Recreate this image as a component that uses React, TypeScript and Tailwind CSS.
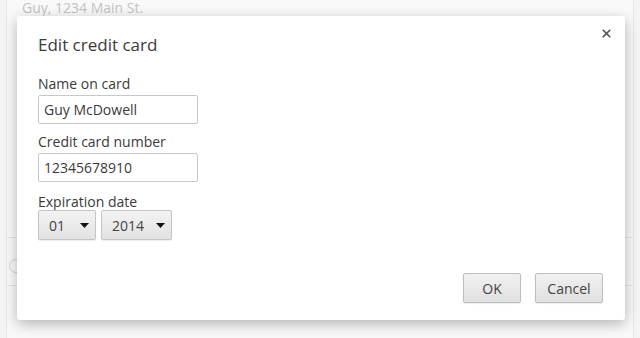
import { X } from "lucide-react";

function Caret() {
  return (
    <svg width="9" height="5" viewBox="0 0 9 5" className="shrink-0">
      <path d="M0 0h9L4.5 5z" fill="#111" />
    </svg>
  );
}

function Field({ label, value }: { label: string; value: string }) {
  return (
    <div className="flex flex-col">
      <label className="text-[14px] leading-[17px] text-[#3a3a3a]">{label}</label>
      <div className="mt-[3px] flex h-[29px] w-[160px] items-center rounded-[2px] border border-[#c8c8c8] bg-white pl-[5px] text-[14px] text-[#3a3a3a]">
        {value}
      </div>
    </div>
  );
}

function Select({ value, width }: { value: string; width: string }) {
  return (
    <div
      className={`flex h-[30px] ${width} items-center justify-between rounded-[2px] border border-[#c4c4c4] bg-gradient-to-b from-[#f3f3f3] to-[#e2e2e2] pl-[10px] pr-[6px] text-[14px] text-[#444] shadow-[0_1px_1px_rgba(0,0,0,0.08)]`}
    >
      <span>{value}</span>
      <Caret />
    </div>
  );
}

function Button({ children, width }: { children: string; width: string }) {
  return (
    <button
      className={`flex h-[30px] ${width} items-center justify-center rounded-[2px] border border-[#bdbdbd] bg-gradient-to-b from-[#f1f1f1] to-[#e0e0e0] text-[14px] text-[#444] shadow-[0_1px_1px_rgba(0,0,0,0.08)]`}
    >
      {children}
    </button>
  );
}

export default function App() {
  return (
    <div
      className="relative h-[338px] w-[640px] overflow-hidden bg-[#f4f4f4]"
      style={{ fontFamily: '"Open Sans", "Noto Sans", sans-serif' }}
    >
      {/* page behind the dialog */}
      <div className="mx-[6px] h-full border-x border-[#e6e6e6] bg-[#f9f9f9]">
        <div className="pl-[15px] text-[14px] leading-[15px] text-[#c4c4c4]">Guy, 1234 Main St.</div>
        <div className="mt-[222px] border-t border-[#e4e4e4]" />
        <div className="mt-[21px] ml-[2px] h-[14px] w-[14px] rounded-full border border-[#d4d4d4]" />
        <div className="mt-[12px] border-t border-[#e4e4e4]" />
      </div>

      {/* dialog */}
      <div className="absolute left-[17px] top-[16px] h-[304px] w-[608px] rounded-[3px] bg-white shadow-[0_4px_14px_rgba(0,0,0,0.28)]">
        <button className="absolute right-[12px] top-[11px] text-[#555]">
          <X size={13} strokeWidth={3.2} />
        </button>
        <div className="flex h-full flex-col px-[21px] pt-[18px] pb-[17px]">
          <h1 className="text-[17px] leading-[22px] text-[#3a3a3a]">Edit credit card</h1>
          <div className="mt-[19px] flex flex-col gap-[9px]">
            <Field label="Name on card" value="Guy McDowell" />
            <Field label="Credit card number" value="12345678910" />
            <div className="mt-[2px] flex flex-col">
              <label className="text-[14px] leading-[17px] text-[#3a3a3a]">Expiration date</label>
              <div className="flex gap-[5px]">
                <Select value="01" width="w-[58px]" />
                <Select value="2014" width="w-[71px]" />
              </div>
            </div>
          </div>
          <div className="mt-auto flex justify-end gap-[14px] pr-[1px]">
            <Button width="w-[58px]">OK</Button>
            <Button width="w-[68px]">Cancel</Button>
          </div>
        </div>
      </div>
    </div>
  );
}
